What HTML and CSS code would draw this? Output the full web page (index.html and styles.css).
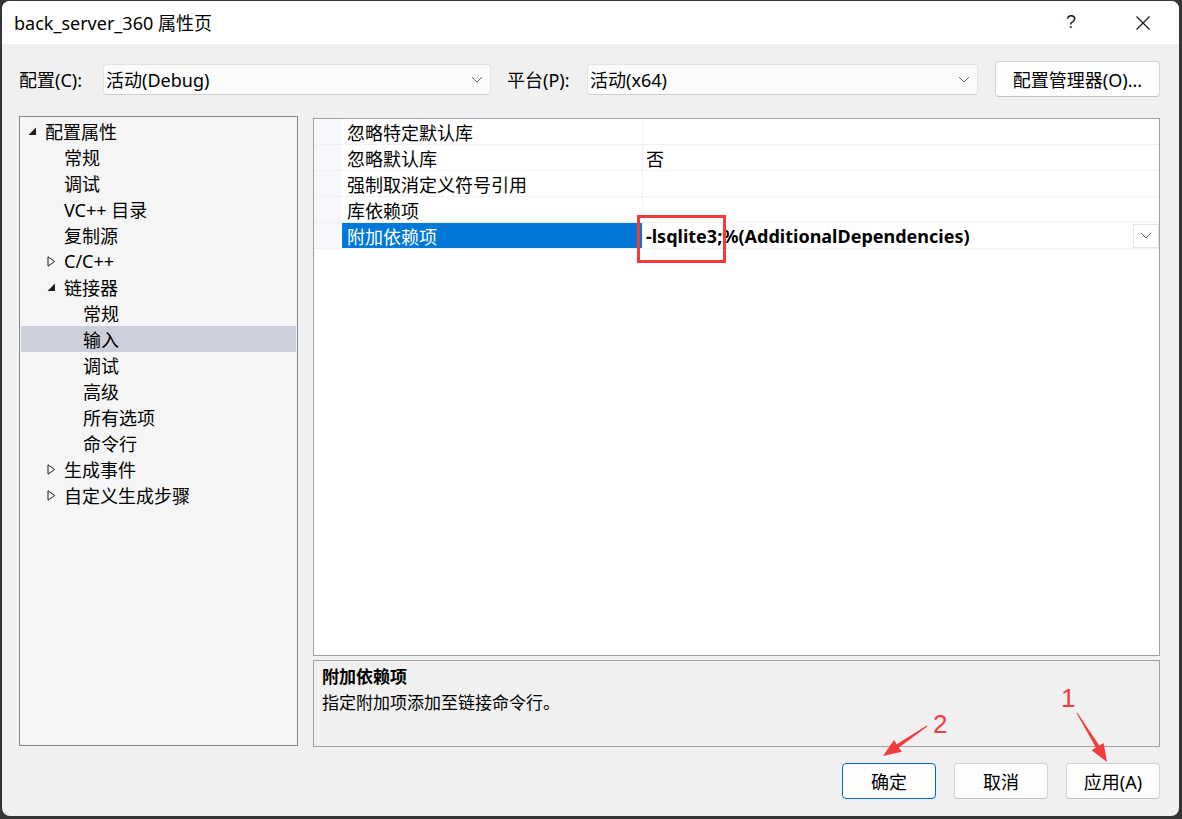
FILE: index.html
```html
<!DOCTYPE html>
<html lang="zh-CN">
<head>
<meta charset="utf-8">
<title>back_server_360 属性页</title>
<link rel="stylesheet" href="styles.css">
</head>
<body>
<div class="window">
  <div class="titlebar">
    <span class="title">back_server_360 属性页</span>
    <span class="help">?</span>
    <span class="close"><svg width="16" height="16" viewBox="0 0 16 16"><path d="M1.5 1.5 L14.5 14.5 M14.5 1.5 L1.5 14.5" stroke="#1a1a1a" stroke-width="1.3" fill="none"/></svg></span>
  </div>
  <div class="content">
    <div class="toolbar">
      <span class="lbl lbl1">配置(C):</span>
      <div class="combo combo1"><span>活动(Debug)</span><svg class="chev" width="12" height="7" viewBox="0 0 12 7"><path d="M1 1 L6 6 L11 1" stroke="#6a6a6a" stroke-width="1" fill="none"/></svg></div>
      <span class="lbl lbl2">平台(P):</span>
      <div class="combo combo2"><span>活动(x64)</span><svg class="chev" width="12" height="7" viewBox="0 0 12 7"><path d="M1 1 L6 6 L11 1" stroke="#6a6a6a" stroke-width="1" fill="none"/></svg></div>
      <button class="btn mgr">配置管理器(O)...</button>
    </div>
    <div class="main">
      <div class="tree">
        <div class="node l0"><span class="tg"><svg width="9" height="9" viewBox="0 0 9 9"><path d="M8 0.5 L8 8 L0.5 8 Z" fill="#1e1e1e"/></svg></span><span>配置属性</span></div>
        <div class="node l1"><span class="tg"></span><span>常规</span></div>
        <div class="node l1"><span class="tg"></span><span>调试</span></div>
        <div class="node l1"><span class="tg"></span><span>VC++ 目录</span></div>
        <div class="node l1"><span class="tg"></span><span>复制源</span></div>
        <div class="node l1"><span class="tg"><svg width="9" height="11" viewBox="0 0 9 11"><path d="M1 0.8 L7.6 5.5 L1 10.2 Z" fill="none" stroke="#1e1e1e" stroke-width="1"/></svg></span><span>C/C++</span></div>
        <div class="node l1"><span class="tg"><svg width="9" height="9" viewBox="0 0 9 9"><path d="M8 0.5 L8 8 L0.5 8 Z" fill="#1e1e1e"/></svg></span><span>链接器</span></div>
        <div class="node l2"><span class="tg"></span><span>常规</span></div>
        <div class="node l2 sel"><span class="tg"></span><span>输入</span></div>
        <div class="node l2"><span class="tg"></span><span>调试</span></div>
        <div class="node l2"><span class="tg"></span><span>高级</span></div>
        <div class="node l2"><span class="tg"></span><span>所有选项</span></div>
        <div class="node l2"><span class="tg"></span><span>命令行</span></div>
        <div class="node l1"><span class="tg"><svg width="9" height="11" viewBox="0 0 9 11"><path d="M1 0.8 L7.6 5.5 L1 10.2 Z" fill="none" stroke="#1e1e1e" stroke-width="1"/></svg></span><span>生成事件</span></div>
        <div class="node l1"><span class="tg"><svg width="9" height="11" viewBox="0 0 9 11"><path d="M1 0.8 L7.6 5.5 L1 10.2 Z" fill="none" stroke="#1e1e1e" stroke-width="1"/></svg></span><span>自定义生成步骤</span></div>
      </div>
      <div class="rightcol">
        <div class="grid">
          <div class="row"><div class="gut"></div><div class="name">忽略特定默认库</div><div class="val"></div></div>
          <div class="row"><div class="gut"></div><div class="name">忽略默认库</div><div class="val">否</div></div>
          <div class="row"><div class="gut"></div><div class="name">强制取消定义符号引用</div><div class="val"></div></div>
          <div class="row"><div class="gut"></div><div class="name">库依赖项</div><div class="val"></div></div>
          <div class="row selrow"><div class="gut"></div><div class="name">附加依赖项</div><div class="val bold"><span>-lsqlite3;%(AdditionalDependencies)</span><span class="ddbtn"><svg width="12" height="7" viewBox="0 0 12 7"><path d="M1 1 L6 6 L11 1" stroke="#6a6a6a" stroke-width="1" fill="none"/></svg></span></div></div>
        </div>
        <div class="desc">
          <div class="dtitle">附加依赖项</div>
          <div class="dtext">指定附加项添加至链接命令行。</div>
        </div>
      </div>
    </div>
    <div class="footer">
      <button class="btn ok">确定</button>
      <button class="btn">取消</button>
      <button class="btn">应用(A)</button>
    </div>
  </div>
</div>
<svg class="annot" width="1182" height="819" viewBox="0 0 1182 819">
  <rect x="638.5" y="216.5" width="86" height="45" fill="none" stroke="#f23c3c" stroke-width="3"/>
  <polygon points="1077.4,712.7 1099.3,745.6 1103.6,742.9 1107,762 1091.6,750.3 1095.9,747.6 1076.6,713.3" fill="#f23c3c"/>
  <polygon points="927.3,726.4 899.0,747.6 901.8,751.7 883,756 894.0,740.1 896.8,744.2 926.7,725.6" fill="#f23c3c"/>
  <text x="1061" y="707" class="num">1</text>
  <text x="933" y="733" class="num">2</text>
</svg>
</body>
</html>
```
FILE: styles.css
```css
html, body {
  margin: 0;
  padding: 0;
}
body {
  width: 1182px;
  height: 819px;
  background: #353535;
  position: relative;
  overflow: hidden;
  font-family: "Noto Sans", "Noto Sans CJK SC", sans-serif;
  font-size: 18px;
  color: #000;
}
.window {
  position: absolute;
  left: 2px;
  top: 1px;
  width: 1177px;
  height: 815px;
  border-radius: 8px;
  overflow: hidden;
  background: #f0f0f0;
  display: flex;
  flex-direction: column;
}
.titlebar {
  height: 43px;
  background: #ffffff;
  display: flex;
  align-items: center;
  flex-shrink: 0;
}
.title {
  margin-left: 12px;
  font-size: 18px;
  color: #000;
  flex: 1;
  padding-bottom: 2px;
}
.help {
  font-size: 18px;
  color: #1a1a1a;
  margin-right: 59px;
  font-family: "Liberation Sans", sans-serif;
}
.close {
  display: flex;
  margin-right: 28px;
}
.content {
  flex: 1;
  display: flex;
  flex-direction: column;
  padding: 0 19px 0 17px;
}
.toolbar {
  display: flex;
  align-items: center;
  height: 36px;
  margin-top: 17px;
}
.lbl {
  font-size: 18px;
  flex-shrink: 0;
}
.lbl1 { width: 84px; }
.lbl2 { width: 80px; margin-left: 16px; }
.combo {
  height: 31px;
  box-sizing: border-box;
  background: #fbfbfb;
  border: 1px solid #e3e3e3;
  border-bottom-color: #cfcfcf;
  border-radius: 4px;
  display: flex;
  align-items: center;
  justify-content: space-between;
  padding: 0 7px 0 2px;
  font-size: 18px;
}
.combo1 { width: 388px; }
.combo2 { width: 391px; }
.btn {
  font-family: "Noto Sans", "Noto Sans CJK SC", sans-serif;
  font-size: 18px;
  background: #fdfdfd;
  border: 1px solid #d3d3d3;
  border-bottom-color: #c2c2c2;
  border-radius: 4px;
  color: #000;
  padding: 0;
  box-sizing: border-box;
  height: 36px;
}
.mgr {
  width: 165px;
  margin-left: 17px;
}
.main {
  display: flex;
  margin-top: 19px;
  gap: 15px;
}
.tree {
  width: 279px;
  height: 630px;
  box-sizing: border-box;
  border: 1px solid #84878f;
  background: #f5f5f5;
  padding: 1px;
  flex-shrink: 0;
}
.node {
  height: 26px;
  display: flex;
  align-items: center;
  font-size: 18px;
  white-space: nowrap;
}
.node.sel { background: #cccedb; }
.tg {
  width: 17px;
  flex-shrink: 0;
  display: flex;
  align-items: center;
}
.l0 { padding-left: 7px; }
.l1 { padding-left: 26px; }
.l2 { padding-left: 45px; }
.rightcol {
  width: 848px;
  margin-top: 2px;
  display: flex;
  flex-direction: column;
  gap: 4px;
}
.grid {
  height: 538px;
  box-sizing: border-box;
  border: 1px solid #a0a0a0;
  background: #ffffff;
}
.row {
  display: flex;
  height: 26px;
  box-sizing: border-box;
  border-bottom: 1px solid #f0f0f0;
  font-size: 18px;
}
.gut {
  width: 28px;
  background: #f5f7fa;
  flex-shrink: 0;
}
.name {
  width: 301px;
  flex-shrink: 0;
  border-right: 1px solid #f0f0f0;
  padding-left: 5px;
  box-sizing: border-box;
  display: flex;
  align-items: center;
  white-space: nowrap;
}
.val {
  flex: 1;
  padding-left: 3px;
  display: flex;
  align-items: center;
  justify-content: space-between;
  white-space: nowrap;
}
.selrow .name {
  background: #0078d7;
  color: #ffffff;
}
.bold {
  font-weight: bold;
}
.ddbtn {
  width: 26px;
  height: 24px;
  box-sizing: border-box;
  border: 1px solid #e6e6e6;
  background: #ffffff;
  display: flex;
  align-items: center;
  justify-content: center;
}
.desc {
  height: 87px;
  box-sizing: border-box;
  border: 1px solid #a0a0a0;
  background: #f0f0f0;
  padding: 3px 8px;
}
.dtitle {
  font-weight: bold;
  font-size: 17px;
  line-height: 26px;
}
.dtext {
  font-size: 17px;
  line-height: 26px;
}
.footer {
  display: flex;
  justify-content: flex-end;
  gap: 18px;
  margin-top: 16px;
}
.footer .btn {
  width: 94px;
}
.btn.ok {
  border: 1px solid #0067c0;
}
.annot {
  position: absolute;
  left: 0;
  top: 0;
  pointer-events: none;
}
.num {
  font-family: "Liberation Sans", sans-serif;
  font-size: 26px;
  fill: #f23c3c;
}
```
